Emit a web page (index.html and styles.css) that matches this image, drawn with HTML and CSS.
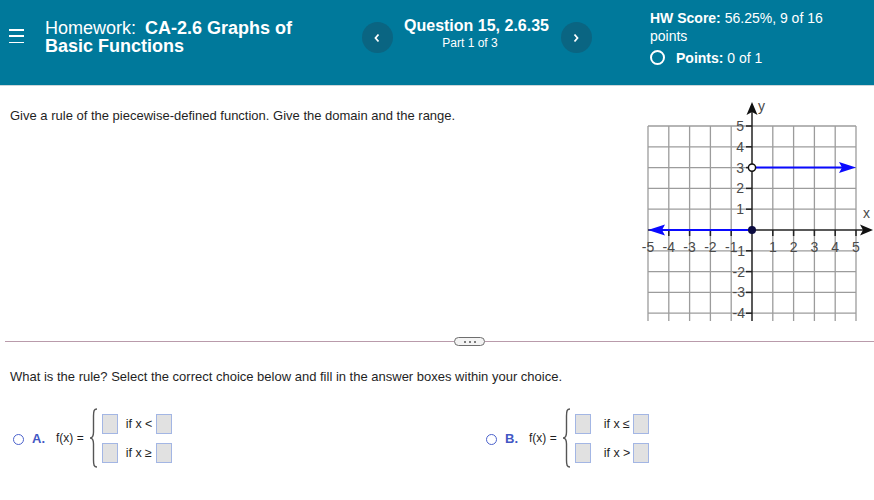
FILE: index.html
```html
<!DOCTYPE html>
<html lang="en">
<head>
<meta charset="utf-8">
<title>Homework: CA-2.6 Graphs of Basic Functions</title>
<link rel="stylesheet" href="styles.css">
</head>
<body>
<header class="topbar">
  <div class="menu"><span></span><span></span><span></span></div>
  <div class="title"><span class="hw">Homework:</span> <b>CA-2.6 Graphs of Basic Functions</b></div>
  <div class="qnav">
    <span class="navbtn"><svg width="8" height="10" viewBox="0 0 8 10"><polyline points="5.5,1.5 2.5,5 5.5,8.5" fill="none" stroke="#fff" stroke-width="1.8"/></svg></span>
    <div class="qinfo">
      <div class="qnum">Question 15, 2.6.35</div>
      <div class="part">Part 1 of 3</div>
    </div>
    <span class="navbtn"><svg width="8" height="10" viewBox="0 0 8 10"><polyline points="2.5,1.5 5.5,5 2.5,8.5" fill="none" stroke="#fff" stroke-width="1.8"/></svg></span>
  </div>
  <div class="score">
    <div class="hw-score"><b>HW Score:</b> 56.25%, 9 of 16 points</div>
    <div class="points"><span class="ring"></span><b>Points:</b>&nbsp;0 of 1</div>
  </div>
</header>

<main class="content">
  <section class="problem">
    <p class="question">Give a rule of the piecewise-defined function. Give the domain and the range.</p>
    <svg class="graph" width="244" height="224" viewBox="0 0 244 224">
      <g class="grid">
        <line x1="18" y1="29" x2="18" y2="224"/>
        <line x1="38.8" y1="29" x2="38.8" y2="224"/>
        <line x1="59.6" y1="29" x2="59.6" y2="224"/>
        <line x1="80.4" y1="29" x2="80.4" y2="224"/>
        <line x1="101.2" y1="29" x2="101.2" y2="224"/>
        <line x1="142.8" y1="29" x2="142.8" y2="224"/>
        <line x1="163.6" y1="29" x2="163.6" y2="224"/>
        <line x1="184.4" y1="29" x2="184.4" y2="224"/>
        <line x1="205.2" y1="29" x2="205.2" y2="224"/>
        <line x1="226" y1="29" x2="226" y2="224"/>
        <line x1="18" y1="29" x2="226" y2="29"/>
        <line x1="18" y1="49.8" x2="226" y2="49.8"/>
        <line x1="18" y1="70.6" x2="226" y2="70.6"/>
        <line x1="18" y1="91.4" x2="226" y2="91.4"/>
        <line x1="18" y1="112.2" x2="226" y2="112.2"/>
        <line x1="18" y1="153.8" x2="226" y2="153.8"/>
        <line x1="18" y1="174.6" x2="226" y2="174.6"/>
        <line x1="18" y1="195.4" x2="226" y2="195.4"/>
        <line x1="18" y1="216.2" x2="226" y2="216.2"/>
      </g>
      <g class="axes">
        <line x1="122" y1="10" x2="122" y2="224"/>
        <line x1="18" y1="133" x2="236" y2="133"/>
        <line x1="116" y1="29" x2="122" y2="29"/>
        <line x1="116" y1="49.8" x2="122" y2="49.8"/>
        <line x1="116" y1="70.6" x2="122" y2="70.6"/>
        <line x1="116" y1="91.4" x2="122" y2="91.4"/>
        <line x1="116" y1="112.2" x2="122" y2="112.2"/>
        <line x1="116" y1="153.8" x2="122" y2="153.8"/>
        <line x1="116" y1="174.6" x2="122" y2="174.6"/>
        <line x1="116" y1="195.4" x2="122" y2="195.4"/>
        <line x1="116" y1="216.2" x2="122" y2="216.2"/>
        <line x1="38.8" y1="133" x2="38.8" y2="139"/>
        <line x1="59.6" y1="133" x2="59.6" y2="139"/>
        <line x1="80.4" y1="133" x2="80.4" y2="139"/>
        <line x1="101.2" y1="133" x2="101.2" y2="139"/>
        <line x1="142.8" y1="133" x2="142.8" y2="139"/>
        <line x1="163.6" y1="133" x2="163.6" y2="139"/>
        <line x1="184.4" y1="133" x2="184.4" y2="139"/>
        <line x1="205.2" y1="133" x2="205.2" y2="139"/>
        <line x1="226" y1="133" x2="226" y2="139"/>
      </g>
      <path class="arrow" d="M122,5 L127.5,18 L122,15 L116.5,18 Z"/>
      <path class="arrow" d="M243,133 L230,127.5 L233,133 L230,138.5 Z"/>
      <g class="labels">
        <text x="18" y="155" text-anchor="middle">-5</text>
        <text x="38.8" y="155" text-anchor="middle">-4</text>
        <text x="59.6" y="155" text-anchor="middle">-3</text>
        <text x="80.4" y="155" text-anchor="middle">-2</text>
        <text x="101.2" y="155" text-anchor="middle">-1</text>
        <text x="142.8" y="155" text-anchor="middle">1</text>
        <text x="163.6" y="155" text-anchor="middle">2</text>
        <text x="184.4" y="155" text-anchor="middle">3</text>
        <text x="205.2" y="155" text-anchor="middle">4</text>
        <text x="226" y="155" text-anchor="middle">5</text>
        <text x="114" y="34" text-anchor="end">5</text>
        <text x="114" y="54.8" text-anchor="end">4</text>
        <text x="114" y="75.6" text-anchor="end">3</text>
        <text x="114" y="96.4" text-anchor="end">2</text>
        <text x="114" y="117.2" text-anchor="end">1</text>
        <text x="115" y="158.8" text-anchor="end">-1</text>
        <text x="115" y="179.6" text-anchor="end">-2</text>
        <text x="115" y="200.4" text-anchor="end">-3</text>
        <text x="115" y="221.2" text-anchor="end">-4</text>
        <text x="128" y="14">y</text>
        <text x="233" y="121">x</text>
      </g>
      <g class="plot">
        <line x1="30" y1="133" x2="122" y2="133"/>
        <line x1="126" y1="70.6" x2="214" y2="70.6"/>
      </g>
      <path class="blue-arrow" d="M18,133 L35,127.5 L32,133 L35,138.5 Z"/>
      <path class="blue-arrow" d="M226,70.6 L209,65.1 L212,70.6 L209,76.1 Z"/>
      <circle class="dot-closed" cx="122" cy="133" r="4"/>
      <circle class="dot-open" cx="122" cy="70.6" r="3.6"/>
    </svg>
  </section>

  <div class="divider">
    <span class="line-l"></span>
    <span class="pill"><i></i><i></i><i></i></span>
    <span class="line-r"></span>
  </div>

  <p class="prompt">What is the rule? Select the correct choice below and fill in the answer boxes within your choice.</p>

  <div class="choices">
    <div class="choice choice-a">
      <span class="radio"></span>
      <span class="letter">A.</span>
      <span class="fx">f(x) =</span>
      <svg class="brace" width="9" height="60" viewBox="0 0 9 60"><path d="M8,1 C5,1 4.5,3 4.5,8 L4.5,24 C4.5,28 3.5,30 1,30 C3.5,30 4.5,32 4.5,36 L4.5,52 C4.5,57 5,59 8,59" fill="none" stroke="#555" stroke-width="1.4"/></svg>
      <div class="cases">
        <span class="box"></span><span class="cond">if x &lt;</span><span class="box"></span>
        <span class="box"></span><span class="cond">if x ≥</span><span class="box"></span>
      </div>
    </div>
    <div class="choice choice-b">
      <span class="radio"></span>
      <span class="letter">B.</span>
      <span class="fx">f(x) =</span>
      <svg class="brace" width="9" height="60" viewBox="0 0 9 60"><path d="M8,1 C5,1 4.5,3 4.5,8 L4.5,24 C4.5,28 3.5,30 1,30 C3.5,30 4.5,32 4.5,36 L4.5,52 C4.5,57 5,59 8,59" fill="none" stroke="#555" stroke-width="1.4"/></svg>
      <div class="cases">
        <span class="box"></span><span class="cond">if x ≤</span><span class="box"></span>
        <span class="box"></span><span class="cond">if x &gt;</span><span class="box"></span>
      </div>
    </div>
  </div>
</main>
</body>
</html>
```

FILE: styles.css
```css
html, body {
  margin: 0;
  padding: 0;
  background: #fff;
}

body {
  width: 874px;
  height: 500px;
  overflow: hidden;
  font-family: "Liberation Sans", Arial, sans-serif;
  color: #1f1f1f;
}

/* ---------- header ---------- */
.topbar {
  display: flex;
  align-items: flex-start;
  height: 85px;
  background: #00799b;
  color: #fff;
  border-bottom: 1px solid #cdd6da;
}

.menu {
  width: 45px;
  box-sizing: border-box;
  padding: 29px 0 0 9px;
  display: flex;
  flex-direction: column;
  gap: 4.4px;
}

.menu span {
  display: block;
  width: 15px;
  height: 1.9px;
  background: #fff;
}

.title {
  width: 316.5px;
  box-sizing: border-box;
  padding: 19px 56px 0 0;
  font-size: 18px;
  line-height: 18px;
}

.title b {
  margin-left: 4px;
}

.qnav {
  display: flex;
  align-items: flex-start;
}

.navbtn {
  width: 31px;
  height: 31px;
  margin-top: 22px;
  border-radius: 50%;
  background: #0a6582;
  display: flex;
  align-items: center;
  justify-content: center;
}

.qinfo {
  width: 168px;
  padding-top: 17px;
  text-align: center;
}

.qnum {
  font-size: 16px;
  line-height: 18px;
  font-weight: bold;
}

.part {
  margin-top: 1px;
  padding-right: 13px;
  font-size: 12px;
  line-height: 14px;
}

.score {
  margin-left: 58.5px;
  width: 200px;
  padding-top: 10px;
}

.hw-score {
  font-size: 14px;
  line-height: 17.5px;
}

.points {
  display: flex;
  align-items: center;
  margin-top: 4.5px;
  font-size: 14px;
  line-height: 16px;
}

.ring {
  width: 15px;
  height: 15px;
  box-sizing: border-box;
  border: 2px solid #fff;
  border-radius: 50%;
  margin-right: 11px;
}

/* ---------- content ---------- */
.content {
  display: block;
}

.problem {
  display: flex;
  justify-content: space-between;
  align-items: flex-start;
  padding-top: 11px;
}

.question {
  margin: 11px 0 0 10px;
  font-size: 13px;
  line-height: 15px;
}

.graph {
  display: block;
}

.grid line {
  stroke: #9c9c9c;
  stroke-width: 1.3;
}

.axes line {
  stroke: #222;
  stroke-width: 1.5;
}

.arrow {
  fill: #111;
}

.labels text {
  font-family: "Liberation Sans", Arial, sans-serif;
  font-size: 14px;
  fill: #4a4a4a;
}

.plot line {
  stroke: #0a0aff;
  stroke-width: 2;
}

.blue-arrow {
  fill: #0a0aff;
}

.dot-closed {
  fill: #0c0c40;
}

.dot-open {
  fill: #fff;
  stroke: #111;
  stroke-width: 1.5;
}

.divider {
  display: flex;
  align-items: center;
  height: 9px;
  margin-top: 16px;
  padding-left: 5px;
}

.line-l {
  width: 449px;
  height: 1px;
  background: #b99bab;
}

.line-r {
  flex: 1;
  height: 1px;
  background: #b99bab;
}

.pill {
  width: 31px;
  height: 9px;
  box-sizing: border-box;
  border: 1.5px solid #6e6e6e;
  border-radius: 5px;
  background: #f3f3f3;
  display: flex;
  align-items: center;
  justify-content: center;
  gap: 3px;
}

.pill i {
  display: block;
  width: 2px;
  height: 2px;
  border-radius: 50%;
  background: #555;
}

.prompt {
  margin: 23px 0 0 10px;
  font-size: 13px;
  line-height: 15px;
}

.choices {
  display: flex;
  margin-top: 24px;
  padding-left: 13px;
}

.choice {
  display: flex;
  align-items: center;
}

.choice-a {
  width: 473px;
}

.radio {
  width: 11px;
  height: 11px;
  box-sizing: border-box;
  border: 1.5px solid #4b62cc;
  border-radius: 50%;
  margin-top: 3px;
}

.letter {
  margin-left: 8px;
  font-size: 13px;
  font-weight: bold;
  color: #4257c4;
}

.fx {
  margin-left: 11px;
  font-size: 12px;
}

.brace {
  display: block;
  margin-left: 5px;
}

.cases {
  margin-left: 4px;
  display: grid;
  grid-template-columns: 16px 38px 17px;
  row-gap: 9px;
  align-items: center;
  font-size: 12.5px;
}

.choice-b .cases {
  grid-template-columns: 16px 42px 17px;
}

.cond {
  padding-left: 8px;
}

.choice-b .cond {
  padding-left: 13px;
}

.box {
  display: block;
  width: 16px;
  height: 20px;
  box-sizing: border-box;
  border: 1.5px solid #a3b6e4;
  background: #e1e1e1;
}
```
